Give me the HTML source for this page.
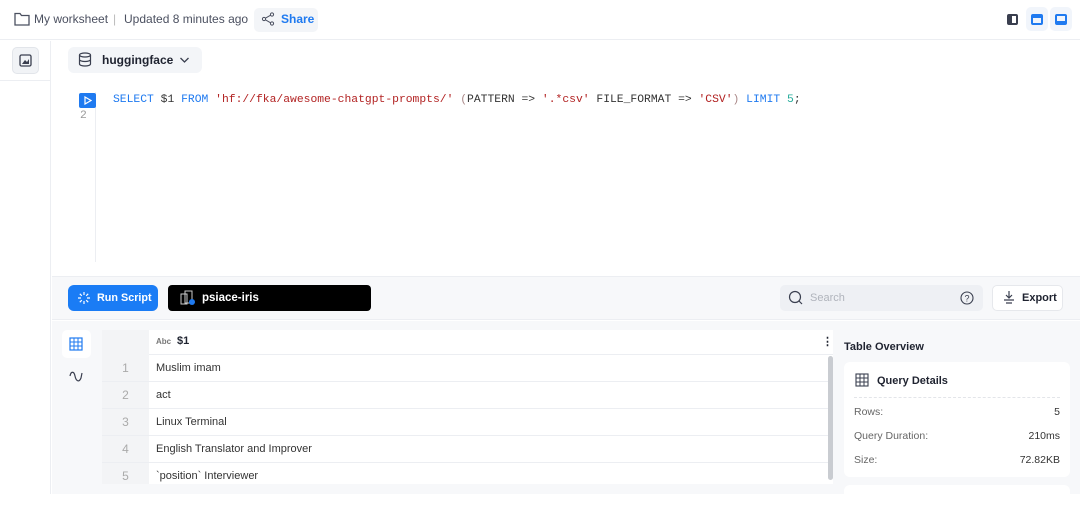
<!DOCTYPE html>
<html><head><style>
*{margin:0;padding:0;box-sizing:border-box}
body{width:1080px;height:494px;overflow:hidden;background:#fff;font-family:"Liberation Sans",sans-serif;color:#1f2330;position:relative}
.a{position:absolute}
.mono{font-family:"Liberation Mono",monospace;font-size:11.35px}
</style></head><body>
<div class="a" style="left:0;top:0;width:1080px;height:40px;border-bottom:1px solid #eceef2"></div>
<svg class="a" style="left:14px;top:12px" width="16" height="14" viewBox="0 0 16 14"><path d="M1 1.5h5l1.5 2H15v9.5H1z" fill="none" stroke="#4b5060" stroke-width="1.3"/></svg>
<div class="a" style="left:34px;top:12px;font-size:12px;color:#4b5060">My worksheet</div>
<div class="a" style="left:113px;top:12px;font-size:12px;color:#bbb">|</div>
<div class="a" style="left:124px;top:12px;font-size:12px;color:#4b5060">Updated 8 minutes ago</div>
<div class="a" style="left:254px;top:8px;width:64px;height:24px;background:#f3f5f8;border-radius:5px"></div>
<svg class="a" style="left:261px;top:12px" width="14" height="14" viewBox="0 0 14 14"><circle cx="11" cy="2.5" r="1.6" fill="none" stroke="#4b5060"/><circle cx="3" cy="7" r="1.6" fill="none" stroke="#4b5060"/><circle cx="11" cy="11.5" r="1.6" fill="none" stroke="#4b5060"/><path d="M4.4 6.2l5.2-3M4.4 7.8l5.2 3" stroke="#4b5060"/></svg>
<div class="a" style="left:281px;top:12px;font-size:12px;font-weight:bold;color:#1f7af0">Share</div>
<div class="a" style="left:1007px;top:14px;width:11px;height:11px;border:2px solid #3a3f4f;border-radius:2px;background:linear-gradient(90deg,#3a3f4f 40%,#fff 40%)"></div>
<div class="a" style="left:1026px;top:7px;width:22px;height:24px;background:#f1f5fb;border-radius:5px"></div>
<div class="a" style="left:1031px;top:14px;width:12px;height:11px;border:2px solid #1f7af0;border-top-width:4px;border-radius:2px"></div>
<div class="a" style="left:1050px;top:7px;width:22px;height:24px;background:#f1f5fb;border-radius:5px"></div>
<div class="a" style="left:1055px;top:14px;width:12px;height:11px;border:2px solid #1f7af0;border-bottom-width:4px;border-radius:2px"></div>
<div class="a" style="left:0;top:41px;width:51px;height:453px;border-right:1px solid #eceef2"></div>
<div class="a" style="left:0;top:80px;width:51px;border-top:1px solid #eceef2"></div>
<div class="a" style="left:12px;top:47px;width:27px;height:27px;background:#f1f3f6;border:1px solid #e2e5ea;border-radius:5px"></div>
<svg class="a" style="left:19px;top:54px" width="13" height="13" viewBox="0 0 13 13"><rect x="1" y="1" width="11" height="11" rx="1.5" fill="none" stroke="#3a3f4f" stroke-width="1.3"/><path d="M3 10l3-4 2 2 2-3v5z" fill="#3a3f4f"/></svg>
<div class="a" style="left:68px;top:47px;width:134px;height:26px;background:#f3f5f8;border-radius:6px"></div>
<svg class="a" style="left:78px;top:52px" width="14" height="15" viewBox="0 0 14 15"><ellipse cx="7" cy="3" rx="5.5" ry="2" fill="none" stroke="#3a3f4f" stroke-width="1.2"/><path d="M1.5 3v9c0 1.1 2.5 2 5.5 2s5.5-.9 5.5-2V3M1.5 7.5c0 1.1 2.5 2 5.5 2s5.5-.9 5.5-2" fill="none" stroke="#3a3f4f" stroke-width="1.2"/></svg>
<div class="a" style="left:102px;top:53px;font-size:12px;font-weight:bold">huggingface</div>
<svg class="a" style="left:179px;top:56px" width="11" height="8" viewBox="0 0 11 8"><path d="M1.5 2l4 4 4-4" fill="none" stroke="#3a3f4f" stroke-width="1.3"/></svg>
<div class="a" style="left:95px;top:92px;height:170px;border-left:1px solid #eceef2"></div>
<div class="a" style="left:79px;top:93px;width:17px;height:15px;background:#1f7af0;border-radius:2px"></div>
<svg class="a" style="left:84px;top:96px" width="8" height="9" viewBox="0 0 8 9"><path d="M1 1l6 3.5L1 8z" fill="none" stroke="#fff" stroke-width="1.2"/></svg>
<div class="a mono" style="left:80px;top:110px;color:#999">2</div>
<div class="a mono" style="left:113px;top:94px;white-space:pre;color:#333"><span style="color:#1f7af0">SELECT</span> $1 <span style="color:#1f7af0">FROM</span> <span style="color:#b22222">'hf://fka/awesome-chatgpt-prompts/'</span> <span style="color:#a88">(</span>PATTERN =&gt; <span style="color:#b22222">'.*csv'</span> FILE_FORMAT =&gt; <span style="color:#b22222">'CSV'</span><span style="color:#a88">)</span> <span style="color:#1f7af0">LIMIT</span> <span style="color:#2a9">5</span>;</div>
<div class="a" style="left:52px;top:276px;width:1028px;height:44px;background:#f7f8fa;border-top:1px solid #eceef2;border-bottom:1px solid #eceef2"></div>
<div class="a" style="left:68px;top:285px;width:90px;height:26px;background:#1a7cf5;border-radius:6px"></div>
<svg class="a" style="left:77px;top:291px" width="14" height="14" viewBox="0 0 14 14"><path d="M7 1v3M7 10v3M1 7h3M10 7h3M2.8 2.8l2 2M9.2 9.2l2 2M2.8 11.2l2-2M11.2 2.8l-2 2" stroke="#fff" stroke-width="1.2"/></svg>
<div class="a" style="left:97px;top:292px;font-size:10.8px;font-weight:bold;color:#fff">Run Script</div>
<div class="a" style="left:168px;top:285px;width:203px;height:26px;background:#000;border-radius:4px"></div>
<svg class="a" style="left:180px;top:290px" width="16" height="16" viewBox="0 0 16 16"><rect x="1" y="4" width="6" height="10" fill="none" stroke="#ccc"/><rect x="5" y="1" width="7" height="12" fill="none" stroke="#ccc"/><circle cx="12" cy="12" r="3" fill="#1f7af0"/></svg>
<div class="a" style="left:202px;top:292px;font-size:11.5px;font-weight:bold;color:#fff">psiace-iris</div>
<div class="a" style="left:780px;top:285px;width:203px;height:26px;background:#eef0f4;border-radius:5px"></div>
<svg class="a" style="left:788px;top:290px" width="15" height="15" viewBox="0 0 15 15"><circle cx="7" cy="7" r="5.5" fill="none" stroke="#3a3f4f" stroke-width="1.2"/><path d="M11 11l3 3" stroke="#3a3f4f" stroke-width="1.2"/></svg>
<div class="a" style="left:810px;top:292px;font-size:11px;color:#b0b4bc">Search</div>
<svg class="a" style="left:960px;top:291px" width="14" height="14" viewBox="0 0 14 14"><circle cx="7" cy="7" r="6" fill="none" stroke="#3a3f4f" stroke-width="1.1"/><text x="7" y="10.5" font-size="9" text-anchor="middle" fill="#3a3f4f" font-family="Liberation Sans">?</text></svg>
<div class="a" style="left:992px;top:285px;width:71px;height:26px;background:#fff;border:1px solid #e6e8ec;border-radius:5px"></div>
<svg class="a" style="left:1002px;top:290px" width="14" height="15" viewBox="0 0 14 15"><path d="M7 1v7M4 5l3 3 3-3M2 10h10M4 13h6" fill="none" stroke="#3a3f4f" stroke-width="1.2"/></svg>
<div class="a" style="left:1022px;top:292px;font-size:11px;font-weight:bold">Export</div>
<div class="a" style="left:52px;top:321px;width:1028px;height:173px;background:#f7f8fa"></div>
<div class="a" style="left:62px;top:330px;width:29px;height:28px;background:#fff;border-radius:5px"></div>
<svg class="a" style="left:69px;top:337px" width="14" height="14" viewBox="0 0 14 14"><rect x="1" y="1" width="12" height="12" fill="none" stroke="#1f7af0" stroke-width="1.2"/><path d="M1 5h12M1 9h12M5 1v12M9 1v12" stroke="#1f7af0" stroke-width="1"/></svg>
<svg class="a" style="left:69px;top:370px" width="15" height="14" viewBox="0 0 15 14"><path d="M1 6c1-5 4-5 5 0s4 7 6 2l1-5" fill="none" stroke="#3a3f4f" stroke-width="1.2"/></svg>
<div class="a" style="left:102px;top:330px;width:731px;height:154px;background:#fff"></div>
<div class="a" style="left:102px;top:330px;width:47px;height:154px;background:#f3f4f6"></div>
<div class="a" style="left:149px;top:330px;width:684px;height:25px;border-bottom:1px solid #eceef2"></div>
<div class="a" style="left:156px;top:337px;font-size:8px;font-weight:bold;color:#777">Abc</div>
<div class="a" style="left:177px;top:335px;font-size:11px;font-weight:bold">$1</div>
<div class="a" style="left:822px;top:335px;font-size:11px;font-weight:bold">⋮</div>
<div class="a" style="left:828px;top:356px;width:5px;height:124px;background:#c9ccd1;border-radius:3px"></div>
<div class="a" style="left:102px;top:355px;width:726px;font-size:11px;color:#333">
<div style="height:27px;border-bottom:1px solid #eceef2;display:flex;align-items:center"><span style="width:47px;text-align:center;color:#aaa;font-size:12px">1</span><span style="padding-left:7px">Muslim imam</span></div>
<div style="height:27px;border-bottom:1px solid #eceef2;display:flex;align-items:center"><span style="width:47px;text-align:center;color:#aaa;font-size:12px">2</span><span style="padding-left:7px">act</span></div>
<div style="height:27px;border-bottom:1px solid #eceef2;display:flex;align-items:center"><span style="width:47px;text-align:center;color:#aaa;font-size:12px">3</span><span style="padding-left:7px">Linux Terminal</span></div>
<div style="height:27px;border-bottom:1px solid #eceef2;display:flex;align-items:center"><span style="width:47px;text-align:center;color:#aaa;font-size:12px">4</span><span style="padding-left:7px">English Translator and Improver</span></div>
<div style="height:26px;display:flex;align-items:center"><span style="width:47px;text-align:center;color:#aaa;font-size:12px">5</span><span style="padding-left:7px">`position` Interviewer</span></div>
</div>
<div class="a" style="left:844px;top:341px;font-size:11px;font-weight:bold">Table Overview</div>
<div class="a" style="left:844px;top:362px;width:226px;height:115px;background:#fff;border-radius:6px"></div>
<div class="a" style="left:844px;top:485px;width:226px;height:20px;background:#fff;border-radius:6px"></div>
<svg class="a" style="left:855px;top:373px" width="14" height="14" viewBox="0 0 14 14"><rect x="1" y="1" width="12" height="12" fill="none" stroke="#3a3f4f" stroke-width="1.1"/><path d="M1 5h12M1 9h12M5 1v12M9 1v12" stroke="#3a3f4f" stroke-width="1"/></svg>
<div class="a" style="left:877px;top:375px;font-size:11px;font-weight:bold">Query Details</div>
<div class="a" style="left:854px;top:397px;width:206px;border-top:1px dashed #e3e5e9"></div>
<div class="a" style="left:854px;top:400px;width:206px;font-size:10.5px;color:#666;line-height:24px">
<div style="display:flex;justify-content:space-between"><span>Rows:</span><span style="color:#333">5</span></div>
<div style="display:flex;justify-content:space-between"><span>Query Duration:</span><span style="color:#333">210ms</span></div>
<div style="display:flex;justify-content:space-between"><span>Size:</span><span style="color:#333">72.82KB</span></div>
</div>
</body></html>
